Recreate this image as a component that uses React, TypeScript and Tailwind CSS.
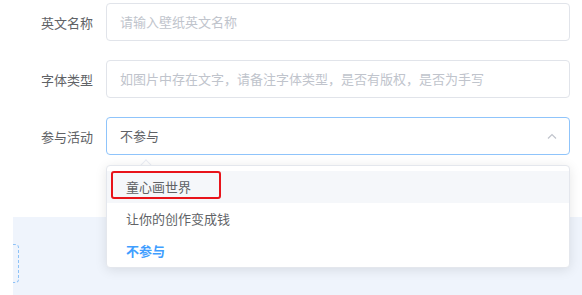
import React from "react";

const font = { fontFamily: '"Noto Sans CJK SC", "Noto Sans", sans-serif' };

function Row({ label, children }: { label: string; children: React.ReactNode }) {
  return (
    <div className="flex items-center h-[38px]">
      <div className="w-[106px] shrink-0 pr-[13px] text-right text-[13px] text-[#606266] leading-none">{label}</div>
      <div className="relative w-[464px] h-full">{children}</div>
    </div>
  );
}

export default function App() {
  return (
    <div className="w-[582px] h-[295px] bg-white overflow-hidden" style={font}>
      <div className="flex flex-col gap-[19px] pt-[3px]">
        <Row label="英文名称">
          <div className="h-full rounded-[4px] border border-[#e1e4ea] flex items-center pl-[13px] text-[13px] text-[#c0c4cc]">
            请输入壁纸英文名称
          </div>
        </Row>
        <Row label="字体类型">
          <div className="h-full rounded-[4px] border border-[#e1e4ea] flex items-center pl-[13px] text-[13px] text-[#c0c4cc]">
            如图片中存在文字，请备注字体类型，是否有版权，是否为手写
          </div>
        </Row>
        <Row label="参与活动">
          <div className="h-full rounded-[4px] border border-[#8fc4fb] flex items-center justify-between pl-[13px] pr-[12px] text-[13px] text-[#606266]">
            <span>不参与</span>
            <svg width="10" height="6" viewBox="0 0 10 6" fill="none">
              <path d="M1 5.5 L5 1.5 L9 5.5" stroke="#c0c4cc" strokeWidth="1.2" />
            </svg>
          </div>
          <div className="absolute left-0 right-0 top-[48px] z-10">
            <div className="absolute left-[36px] -top-[4px] w-[8px] h-[8px] rotate-45 bg-white border-l border-t border-[#ebeef5]" />
            <div className="relative rounded-[4px] border border-[#e4e7ed] bg-white shadow-[0_2px_12px_rgba(0,0,0,0.1)] pt-[5px] text-[13px]">
              <div className="relative h-[32px] flex items-center pl-[19px] bg-[#f5f7fa] text-[#606266]">
                童心画世界
                <div className="absolute left-[4px] top-0 w-[110px] h-[28px] rounded-[3px] border-2 border-[#e8141b]" />
              </div>
              <div className="h-[32px] flex items-center pl-[19px] text-[#606266]">让你的创作变成钱</div>
              <div className="h-[32px] flex items-center pl-[19px] text-[#409eff] font-bold">不参与</div>
            </div>
          </div>
        </Row>
      </div>
      <div className="mt-[62px] ml-[13px] h-[90px] bg-[#eff4fc] overflow-hidden pt-[27px]">
        <div className="-ml-[34px] w-[40px] h-[39px] rounded-[4px] border border-dashed border-[#8ec2f7]" />
      </div>
    </div>
  );
}
